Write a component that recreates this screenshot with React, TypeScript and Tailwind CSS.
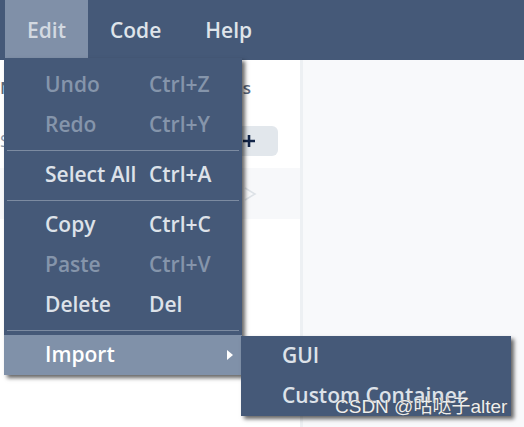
import type { ReactNode } from "react";

const font = "font-['Open_Sans','Noto_Sans',sans-serif]";

function Item({ label, keys, disabled }: { label: string; keys?: string; disabled?: boolean }) {
  return (
    <div className={`flex h-[40px] items-center pl-[41px] text-[21px] font-semibold ${disabled ? "text-[#8595ab]" : "text-[#dde2e9]"}`}>
      <span className="w-[104px] whitespace-nowrap">{label}</span>
      {keys && <span className="whitespace-nowrap">{keys}</span>}
    </div>
  );
}

function Sep() {
  return <div className="mx-[3px] mb-[4px] mt-[5px] h-px bg-[#7c8ba1]" />;
}

function TopItem({ children, active }: { children: ReactNode; active?: boolean }) {
  return (
    <div className={`flex h-[58px] items-center self-start px-[22px] pt-[3px] ${active ? "bg-[#8090a8] text-[#d3d9e1]" : "text-[#dfe4ea]"}`}>
      {children}
    </div>
  );
}

export default function App() {
  return (
    <div className={`relative h-[427px] w-[524px] overflow-hidden bg-white ${font}`}>
      <div className="flex h-[60px] bg-[#455978] pl-[5px] text-[21px] font-semibold">
        <TopItem active>Edit</TopItem>
        <TopItem>Code</TopItem>
        <TopItem>Help</TopItem>
      </div>

      <div className="flex h-[367px]">
        <div className="w-[303px] border-r-[3px] border-[#edf0f3] bg-white">
          <div className="mt-[16px] flex h-[24px] items-center justify-between pr-[49px] text-[17px] font-semibold text-[#5b6a80]">
            <span>Nodes</span>
            <span>Items</span>
          </div>
          <div className="mt-[26px] flex h-[30px] items-center justify-between pr-[22px] text-[17px] text-[#8a97a8]">
            <span>Search</span>
            <div className="flex h-[30px] w-[58px] items-center justify-center rounded-md bg-[#e2e7ec]">
              <svg width="14" height="14" viewBox="0 0 14 14">
                <path d="M7 1v12M1 7h12" stroke="#13264a" strokeWidth="2.6" />
              </svg>
            </div>
          </div>
          <div className="mt-[12px] flex h-[51px] items-center justify-end bg-[#f7f8fa] pr-[43px]">
            <svg width="14" height="16" viewBox="0 0 14 16">
              <path d="M2 2l10 6-10 6" fill="none" stroke="#dde2e7" strokeWidth="1.6" />
            </svg>
          </div>
        </div>
        <div className="flex-1 bg-[#f8f9fb]" />
      </div>

      <div className="absolute left-[4px] top-[58px] w-[238px] bg-[#455978] pt-[7px] shadow-[3px_3px_4px_rgba(0,0,0,0.6)]">
        <Item label="Undo" keys="Ctrl+Z" disabled />
        <Item label="Redo" keys="Ctrl+Y" disabled />
        <Sep />
        <Item label="Select All" keys="Ctrl+A" />
        <Sep />
        <Item label="Copy" keys="Ctrl+C" />
        <Item label="Paste" keys="Ctrl+V" disabled />
        <Item label="Delete" keys="Del" />
        <Sep />
        <div className="flex h-[40px] items-center justify-between bg-[#8091a9] pl-[41px] pr-[9px] text-[21px] font-semibold text-white">
          <span>Import</span>
          <svg width="6" height="10" viewBox="0 0 6 10">
            <path d="M0 0l6 5-6 5z" fill="#ffffff" />
          </svg>
        </div>
      </div>

      <div className="absolute left-[241px] top-[336px] w-[270px] bg-[#455978] shadow-[3px_3px_4px_rgba(0,0,0,0.6)]">
        <Item label="GUI" />
        <Item label="Custom Container" />
      </div>

      <div className="absolute left-[335px] top-[396px] whitespace-nowrap font-['Liberation_Sans','Noto_Sans_CJK_SC',sans-serif] text-[19px] leading-[22px] text-[#eeeeee] [text-shadow:0_0_1px_#444]">
        CSDN @咕哒子alter
      </div>
    </div>
  );
}
